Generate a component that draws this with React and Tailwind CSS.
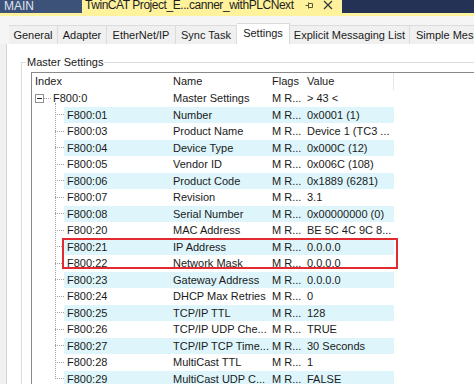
import React from "react";

const rows = [
  ["F800:01", "Number", "0x0001 (1)"],
  ["F800:03", "Product Name", "Device 1 (TC3 ..."],
  ["F800:04", "Device Type", "0x000C (12)"],
  ["F800:05", "Vendor ID", "0x006C (108)"],
  ["F800:06", "Product Code", "0x1889 (6281)"],
  ["F800:07", "Revision", "3.1"],
  ["F800:08", "Serial Number", "0x00000000 (0)"],
  ["F800:20", "MAC Address", "BE 5C 4C 9C 8..."],
  ["F800:21", "IP Address", "0.0.0.0"],
  ["F800:22", "Network Mask", "0.0.0.0"],
  ["F800:23", "Gateway Address", "0.0.0.0"],
  ["F800:24", "DHCP Max Retries", "0"],
  ["F800:25", "TCP/IP TTL", "128"],
  ["F800:26", "TCP/IP UDP Che...", "TRUE"],
  ["F800:27", "TCP/IP TCP Time...", "30 Seconds"],
  ["F800:28", "MultiCast TTL", "1"],
  ["F800:29", "MultiCast UDP C...", "FALSE"],
];

const tabs = [
  ["General", "w-[49px] border-l"],
  ["Adapter", "w-[49px]"],
  ["EtherNet/IP", "w-[69px]"],
  ["Sync Task", "w-[61px]"],
  ["Settings", "w-[53px]"],
  ["Explicit Messaging List", "w-[120px] bg-[#ebebeb]"],
  ["Simple Messaging", "w-[90px]"],
];

export default function App() {
  return (
    <div
      className="w-[474px] h-[384px] overflow-hidden bg-[#f5f5f5] text-[#1a1a1a] flex flex-col"
      style={{ fontFamily: '"Liberation Sans", Arial, sans-serif' }}
    >
      {/* document tab well */}
      <div className="flex h-[13px] bg-[#243255] shrink-0 overflow-hidden">
        <div className="w-[82px] bg-[#3d5278] text-[#dfe5ef] text-[12px] leading-[12px] pl-[4px]">MAIN</div>
        <div className="w-[260px] bg-[#fff29d] flex items-start pl-[3px] overflow-hidden">
          <span className="whitespace-nowrap text-[#1e1e1e] text-[12px] leading-[11px] tracking-[-0.45px]">
            TwinCAT Project_E...canner_withPLCNext
          </span>
          <svg width="9" height="9" viewBox="0 0 9 9" className="ml-[11px] mt-[1px] shrink-0">
            <path d="M0.5 4.5 H3.5 M3.5 1.5 V7.5 M3.5 2.5 H7.5 V6.5 H3.5" stroke="#5a5a3a" strokeWidth="1" fill="none" />
          </svg>
          <svg width="10" height="10" viewBox="0 0 10 10" className="ml-[9px] shrink-0">
            <path d="M1 1 L9 9 M9 1 L1 9" stroke="#3a3a3a" strokeWidth="1.3" fill="none" />
          </svg>
        </div>
        <div className="flex-1" />
      </div>
      <div className="h-[3px] bg-[#fff29d] shrink-0" />

      {/* property tabs */}
      <div className="flex items-end h-[28px] pl-[9px] shrink-0 text-[11px] overflow-hidden">
        {tabs.map(([t, cls]) =>
          t === "Settings" ? (
            <div key={t} className={`${cls} shrink-0 h-[22px] bg-white border border-b-0 border-l-0 border-[#d9d9d9] pt-[3px] leading-[13px] relative top-[1px] text-center whitespace-nowrap`}>
              {t}
            </div>
          ) : (
            <div key={t} className={`${cls} shrink-0 h-[19px] bg-[#f0f0f0] border border-b-0 border-l-0 border-[#dcdcdc] pt-[3px] leading-[13px] text-center whitespace-nowrap overflow-hidden`}>
              {t === "Simple Messaging" ? <div className="text-left pl-[6px]">Simple Messaging</div> : t}
            </div>
          )
        )}
      </div>

      {/* content */}
      <div className="flex-1 flex">
        <div className="w-[7px] bg-[#f0f0f0] border-r border-[#d5d5d5]" />
        <div className="flex-1 bg-white pl-[14px] pt-[18px] relative">
          {/* group box */}
          <div className="border-l border-t border-[#dcdcdc] h-full pl-[9px] pt-[9px] relative">
            <div className="absolute left-[4px] -top-[7px] bg-white px-[1px] text-[11px] leading-[13px]">Master Settings</div>
            <div className="border-l border-t border-[#8a8a8a] h-full text-[11px]">
              {/* header */}
              <div className="flex h-[17px] items-center">
                <div className="w-[138px] pl-[3px]">Index</div>
                <div className="w-[99px] pl-[3px]">Name</div>
                <div className="w-[35px] pl-[3px]">Flags</div>
                <div className="w-[90px] pl-[3px] h-full flex items-center border-r border-[#e5e5e5]">Value</div>
              </div>
              {/* root row */}
              <div className="flex h-[16.5px] items-center relative">
                <div className="w-[138px] flex items-center pl-[3px]">
                  <div className="w-[9px] h-[9px] border border-[#919191] bg-white flex items-center justify-center">
                    <div className="w-[5px] h-[1px] bg-[#202020]" />
                  </div>
                  <div className="w-[7px] border-t border-dotted border-[#a0a0a0]" />
                  <span className="ml-[2px]">F800:0</span>
                </div>
                <div className="w-[99px] pl-[3px] whitespace-nowrap">Master Settings</div>
                <div className="w-[35px] pl-[3px] whitespace-nowrap">M R...</div>
                <div className="w-[90px] pl-[3px] whitespace-nowrap">&gt; 43 &lt;</div>
              </div>
              {/* child rows */}
              <div className="relative">
                <div className="absolute left-[23px] -top-[4px] bottom-[8px] border-l border-dotted border-[#a0a0a0]" />
                {rows.map(([idx, name, val], i) => (
                  <div key={idx} className="flex h-[16.5px] items-center">
                    <div className="w-[32px] flex items-center pl-[23px]">
                      <div className="w-[9px] border-t border-dotted border-[#a0a0a0]" />
                    </div>
                    <div className={`flex h-full items-center ${i % 2 === 0 ? "bg-[#def6fb]" : ""}`}>
                      <div className="w-[106px] pl-[3px]">{idx}</div>
                      <div className="w-[99px] pl-[3px] whitespace-nowrap">{name}</div>
                      <div className="w-[35px] pl-[3px] whitespace-nowrap">M R...</div>
                      <div className="w-[90px] pl-[3px] whitespace-nowrap">{val}</div>
                    </div>
                  </div>
                ))}
              </div>
            </div>
          </div>
          {/* red annotation box */}
          <div className="absolute left-[55px] top-[194px] w-[336px] h-[31px] border-2 border-[#e32a2e]" />
        </div>
      </div>
    </div>
  );
}
